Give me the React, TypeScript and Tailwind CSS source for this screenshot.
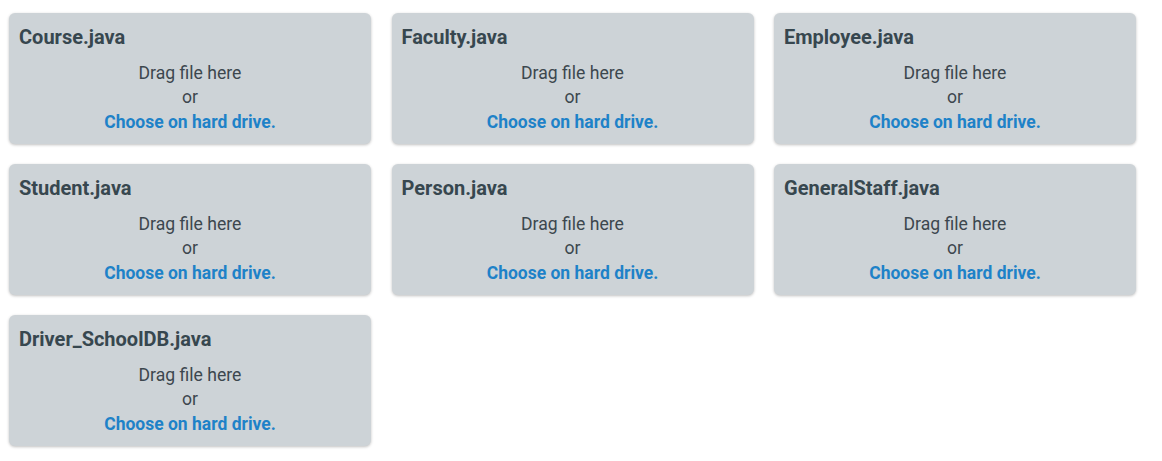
import React from 'react';

const FILES = [
  'Course.java',
  'Faculty.java',
  'Employee.java',
  'Student.java',
  'Person.java',
  'GeneralStaff.java',
  'Driver_SchoolDB.java',
];

function DropCard({ name }: { name: string }) {
  return (
    <div className="h-[131px] rounded-md bg-[#cdd3d7] shadow-[0_1px_3px_rgba(0,0,0,0.25)] px-[10px] pt-[12px]">
      <p className="text-[20px] leading-[24px] font-bold text-[#37474f]">{name}</p>
      <div className="mt-[11.5px] text-center text-[17.6px] leading-[24.5px] text-[#3c474e]">
        <p>Drag file here</p>
        <p>or</p>
        <p className="text-[17.5px] font-bold text-[#1e82c8] cursor-pointer">Choose on hard drive.</p>
      </div>
    </div>
  );
}

export default function App() {
  return (
    <div className="min-h-screen bg-white font-['Roboto',sans-serif] pl-[9px] pt-[13px]">
      <div className="grid grid-cols-[362px_362px_362px] gap-x-[20.5px] gap-y-[20px]">
        {FILES.map(f => <DropCard key={f} name={f} />)}
      </div>
    </div>
  );
}
